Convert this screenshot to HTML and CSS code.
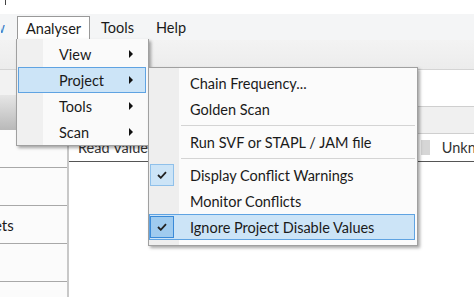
FILE: index.html
```html
<!DOCTYPE html>
<html>

<head>
    <meta charset="UTF-8">
    <title>Analyser menu</title>
    <link rel="stylesheet" href="styles.css">
</head>

<body>
    <div class="window">
        <div class="topstrip"><span class="caret"></span></div>

        <!-- Menu bar -->
        <div class="menubar">
            <span class="bar-item cut">w</span>
            <span class="bar-item open">Analyser</span>
            <span class="bar-item">Tools</span>
            <span class="bar-item">Help</span>
        </div>

        <div class="toolbar"></div>

        <div class="main">
            <div class="side">
                <div class="side-top"></div>
                <div class="side-btn"></div>
                <div class="side-row"></div>
                <div class="side-row"></div>
                <div class="side-row label">ets</div>
                <div class="side-row"></div>
                <div class="side-row"></div>
            </div>
            <div class="content">
                <div class="pane-white"></div>
                <div class="pane-band"></div>
                <div class="grid-head">
                    <span class="col-read">Read Value</span>
                    <span class="col-state"><span class="box"></span>Unkno</span>
                </div>
            </div>
        </div>

        <!-- Analyser drop down -->
        <div class="menu main-menu">
            <div class="item"><span class="text">View</span><span class="arrow"></span></div>
            <div class="item hot"><span class="text">Project</span><span class="arrow"></span></div>
            <div class="item"><span class="text">Tools</span><span class="arrow"></span></div>
            <div class="item"><span class="text">Scan</span><span class="arrow"></span></div>
        </div>

        <!-- Project sub menu -->
        <div class="menu sub-menu">
            <div class="item"><span class="check"></span><span class="text">Chain Frequency...</span></div>
            <div class="item"><span class="check"></span><span class="text">Golden Scan</span></div>
            <div class="sep"></div>
            <div class="item"><span class="check"></span><span class="text">Run SVF or STAPL / JAM file</span></div>
            <div class="sep"></div>
            <div class="item"><span class="check on">
                <svg width="10" height="8" viewBox="0 0 10 8"><path d="M1 4 L3.8 6.8 L9 1.2" fill="none" stroke="#222" stroke-width="1.8"/></svg>
            </span><span class="text">Display Conflict Warnings</span></div>
            <div class="item"><span class="check"></span><span class="text">Monitor Conflicts</span></div>
            <div class="item hot"><span class="check on">
                <svg width="10" height="8" viewBox="0 0 10 8"><path d="M1 4 L3.8 6.8 L9 1.2" fill="none" stroke="#222" stroke-width="1.8"/></svg>
            </span><span class="text">Ignore Project Disable Values</span></div>
        </div>
    </div>
</body>

</html>
```

FILE: styles.css
```css
body {
    margin: 0;
    padding: 0;
    background-color: white;
    font-family: Lato, "Noto Sans", sans-serif;
    font-size: 14.5px;
    color: #1a1a1a;
}

.window {
    position: relative;
    width: 474px;
    height: 297px;
    overflow: hidden;
}

.topstrip {
    height: 14px;
    background-color: white;
}

.caret {
    display: block;
    margin-left: 5px;
    width: 1px;
    height: 5px;
    background-color: #444;
}

.menubar {
    display: flex;
    align-items: stretch;
    height: 26px;
    background-color: #f4f5f6;
    white-space: nowrap;
}

.bar-item {
    display: flex;
    align-items: center;
    padding: 0 10px;
    font-size: 14.5px;
    border: 1px solid transparent;
    border-bottom: none;
}

.bar-item.cut {
    color: #3a7bc8;
    width: 4px;
    padding: 0;
    margin-right: 11px;
    overflow: hidden;
    justify-content: flex-end;
}

.bar-item.open {
    margin-top: 2px;
    padding: 0 8px;
    background-color: white;
    border-color: #999;
}

.toolbar {
    height: 29px;
    background: linear-gradient(#f3f3f3, #ececec);
    border-bottom: 1px solid #d4d4d4;
}

.main {
    display: flex;
    height: 227px;
}

.side {
    width: 67px;
    border-right: 2px solid #c8c8c8;
    background-color: #fbfbfb;
}

.side-top {
    height: 25px;
    background-color: #f2f2f2;
}

.side-btn {
    height: 35px;
    background: linear-gradient(#e6e6e6, #b9b9b9);
}

.side-row {
    height: 37px;
    border-bottom: 1px solid #a8a8a8;
    display: flex;
    align-items: center;
    font-size: 15px;
}

.side-row.label {
    margin-left: -6px;
}

.content {
    flex: 1;
    background-color: white;
}

.pane-white {
    height: 36px;
    border-bottom: 1px solid #cfcfcf;
}

.pane-band {
    height: 26px;
    background-color: #f0f0f0;
    border-bottom: 1px solid #cfcfcf;
}

.grid-head {
    display: flex;
    justify-content: space-between;
    height: 27px;
    border-bottom: 1px solid #555;
    font-size: 14.5px;
    white-space: nowrap;
}

.col-read {
    padding-left: 9px;
    padding-top: 5px;
    color: #333;
}

.col-state {
    display: flex;
    align-items: center;
    color: #333;
    margin-right: -10px;
}

.box {
    width: 9px;
    height: 15px;
    background-color: #d6d6d6;
    margin-right: 12px;
}

/* Menus */
.menu {
    position: absolute;
    background-color: #f2f2f2;
    border: 1px solid #a0a0a0;
    box-shadow: 2px 2px 3px rgba(0, 0, 0, 0.35);
    padding: 2px;
    box-sizing: border-box;
    white-space: nowrap;
}

.main-menu {
    left: 16px;
    top: 39px;
    width: 133px;
    height: 107px;
    background: linear-gradient(to right, #f0f0f0 0, #f0f0f0 26px, #fafafa 26px);
    border-top: none;
}

.sub-menu {
    left: 148px;
    top: 67px;
    width: 270px;
    height: 179px;
    background: linear-gradient(to right, #eeeeee 0, #eeeeee 30px, #fbfbfb 30px);
}

.item {
    display: flex;
    align-items: center;
    height: 26px;
    font-size: 14.5px;
    border: 1px solid transparent;
    box-sizing: border-box;
}

.main-menu .item {
    margin-left: -1px;
}

.main-menu .text {
    padding-left: 40px;
    flex: 1;
}

.arrow {
    width: 0;
    height: 0;
    border-top: 4px solid transparent;
    border-bottom: 4px solid transparent;
    border-left: 4px solid #111;
    margin-right: 12px;
}

.item.hot {
    background-color: #cce4f7;
    border-color: #5fa3e2;
}

.check {
    width: 24px;
    height: 22px;
    margin-right: 16px;
    display: flex;
    align-items: center;
    justify-content: center;
    box-sizing: border-box;
}

.sub-menu .item {
    margin-left: -2px;
}

.check.on {
    background-color: #cce4f7;
    border: 1px solid #8fc0ea;
}

.item.hot .check.on {
    background-color: #9fcbef;
    border-color: #3a8ad8;
}

.sep {
    height: 1px;
    background-color: #d4d4d4;
    margin: 3px 0 3px 30px;
}
```
